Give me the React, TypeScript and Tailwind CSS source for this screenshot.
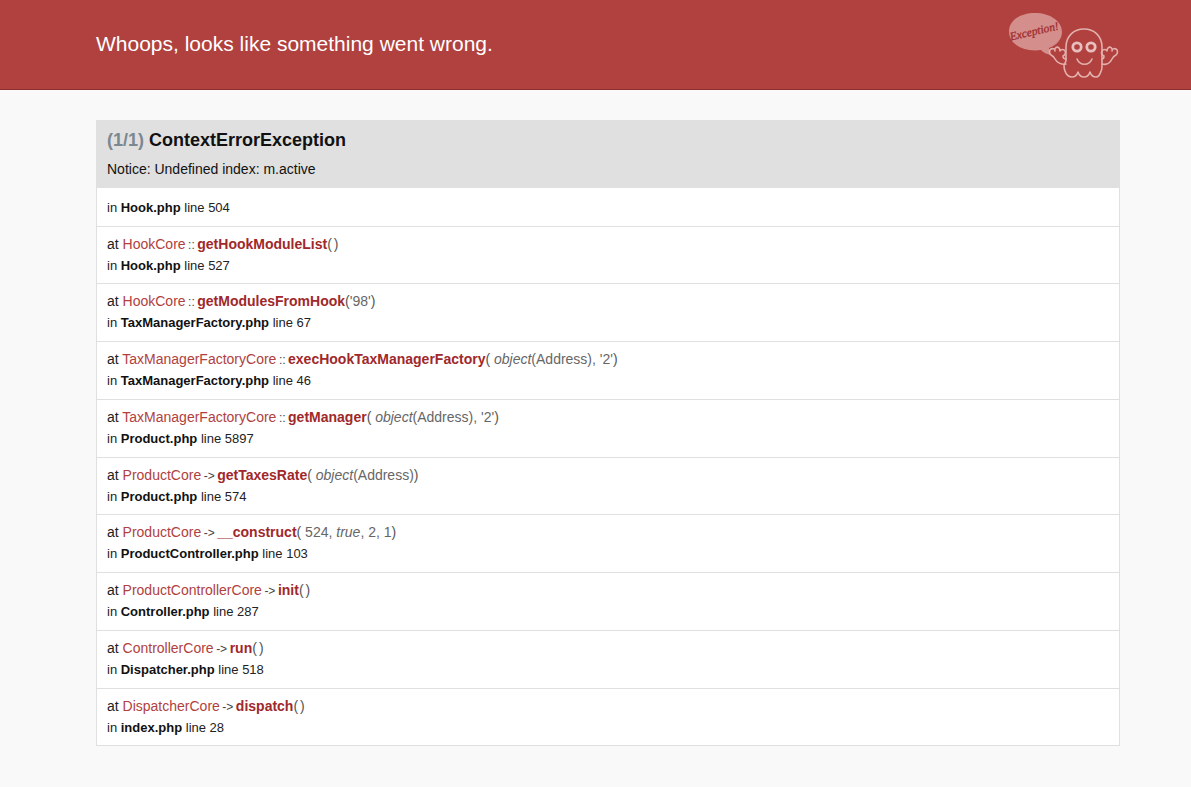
import React from "react";

const F = "font-['Liberation_Sans',Arial,sans-serif]";

type Row = { cls: string; sep: string; fn: string; args: React.ReactNode; file: string; line: number };

const I = ({ children }: { children: React.ReactNode }) => <em className="italic text-[#666]">{children}</em>;
const A = ({ children }: { children: React.ReactNode }) => <span className="text-[#666]">{children}</span>;

const rows: Row[] = [
  { cls: "HookCore", sep: "::", fn: "getHookModuleList", args: "", file: "Hook.php", line: 527 },
  { cls: "HookCore", sep: "::", fn: "getModulesFromHook", args: <A>'98'</A>, file: "TaxManagerFactory.php", line: 67 },
  { cls: "TaxManagerFactoryCore", sep: "::", fn: "execHookTaxManagerFactory", args: <><I> object</I><A>(Address), '2'</A></>, file: "TaxManagerFactory.php", line: 46 },
  { cls: "TaxManagerFactoryCore", sep: "::", fn: "getManager", args: <><I> object</I><A>(Address), '2'</A></>, file: "Product.php", line: 5897 },
  { cls: "ProductCore", sep: "->", fn: "getTaxesRate", args: <><I> object</I><A>(Address)</A></>, file: "Product.php", line: 574 },
  { cls: "ProductCore", sep: "->", fn: "__construct", args: <><A> 524, </A><I>true</I><A>, 2, 1</A></>, file: "ProductController.php", line: 103 },
  { cls: "ProductControllerCore", sep: "->", fn: "init", args: "", file: "Controller.php", line: 287 },
  { cls: "ControllerCore", sep: "->", fn: "run", args: "", file: "Dispatcher.php", line: 518 },
  { cls: "DispatcherCore", sep: "->", fn: "dispatch", args: "", file: "index.php", line: 28 },
];

function FileLine({ file, line }: { file: string; line: number }) {
  return (
    <div className="text-[13px] leading-[20.8px] text-[#222]">
      in <b className="font-bold text-[#111]">{file}</b> line {line}
    </div>
  );
}

function Ghost() {
  return (
    <svg width="130" height="88" viewBox="0 0 130 88" className="shrink-0" fill="none">
      <path d="M35 12c15 0 27 8 27 19 0 7-5 13-13 16 0 3 .6 5 2 7-4-.5-8-2.5-10-5-2 .3-4 .5-6 .5-15 0-26-8-26-19S20 12 35 12z" fill="#D48E8C" />
      <text x="35" y="34" textAnchor="middle" fontFamily="'Liberation Serif',serif" fontStyle="italic" fontSize="11.5" fill="#A02C2B" stroke="#A02C2B" strokeWidth="0.3" transform="rotate(-13 35 34)">Exception!</text>
      <g stroke="#E3B0AE" strokeWidth="1.6" strokeLinecap="round" strokeLinejoin="round">
        <path d="M66 60V46c0-11 8-18 18-18s18 7 18 18v18c0 3 0 5-1 6-1 4-3 6-5 6-3 0-5-2-6-5-1 3-3 5-6 5s-5-2-6-5c-1 3-3 5-6 5-4 0-6-3-7-6-1-2-1-4-1-6z" />
        <path d="M66 63c-4 1-9-1-11-5-1-2-2-3-4-4-2-2-2-5 0-6 2-1 4 0 4 2-1-3 2-5 4-3 1 1 1 2 1 3 1-2 4-2 5 0 1 2 0 4-2 5 0 2 1 3 3 3" />
        <path d="M102 63c4 1 8-1 10-5 1-2 2-3 4-4 2-2 2-5 0-6-2-1-4 0-4 2 1-3-2-5-4-3-1 1-1 2-1 3-1-2-4-2-5 0-1 2 0 4 2 5 0 2-1 3-2 3" />
        <path d="M77 58c3 7 12 7 15 0" />
      </g>
      <circle cx="77" cy="46" r="4.2" stroke="#E8BFBE" strokeWidth="2.8" />
      <circle cx="91" cy="46" r="4.2" stroke="#E8BFBE" strokeWidth="2.8" />
    </svg>
  );
}

export default function App() {
  return (
    <div className={`${F} min-h-[787px] bg-[#f9f9f9] text-[14px] text-[#222]`}>
      <header className="h-[90px] bg-[#b0413e] border-b border-[#8a2f2c] pl-[96px] pr-[61px] flex items-center justify-between">
        <h1 className="text-[21px] leading-[28px] -mt-[2px] text-white font-normal">Whoops, looks like something went wrong.</h1>
        <Ghost />
      </header>
      <main className="ml-[96px] w-[1024px] mt-[30px] bg-white border border-[#e0e0e0]">
        <div className="bg-[#e0e0e0] px-[10px] h-[67px] pt-[7px]">
          <h2 className="text-[18px] leading-[25px] font-bold text-[#111]">
            <span className="text-[#7c8790]">(1/1)</span> ContextErrorException
          </h2>
          <p className="text-[14px] leading-[20px] mt-[6px] text-[#111]">Notice: Undefined index: m.active</p>
        </div>
        <div className="px-[10px] pt-[10px] pb-[6.8px]">
          <FileLine file="Hook.php" line={504} />
        </div>
        {rows.map((r, i) => (
          <div key={i} className="border-t border-[#e0e0e0] px-[10px] pt-[7px] pb-[6.97px]">
            <div className="leading-[20px] h-[22px] whitespace-pre">
              at <span className="text-[#b0413e]">{r.cls}</span>
              <span className="text-[#444] text-[12px] leading-none mx-[2.5px]">{r.sep}</span>
              <b className="font-bold text-[#a0282a]">{r.fn}</b>
              <span className="text-[#555]">(</span>{r.args}<span className="text-[#555]">{r.args === "" ? <span className="ml-[2px]">)</span> : ")"}</span>
            </div>
            <FileLine file={r.file} line={r.line} />
          </div>
        ))}
      </main>
    </div>
  );
}
